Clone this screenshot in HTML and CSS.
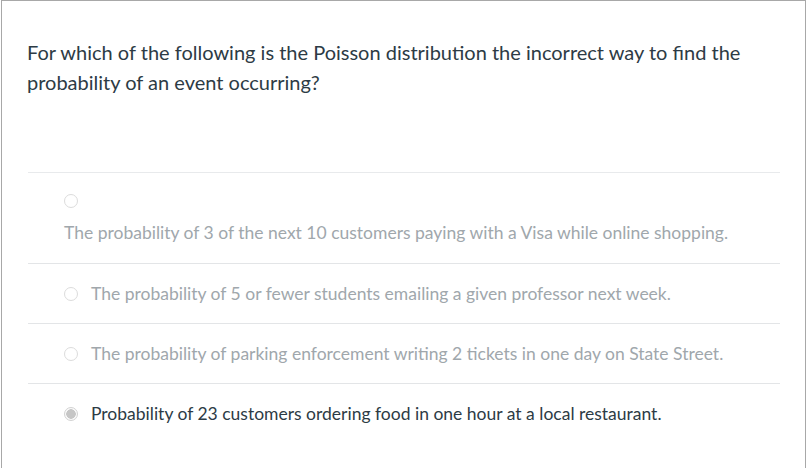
FILE: index.html
```html
<!DOCTYPE html>
<html>
<head>
<meta charset="utf-8">
<link rel="stylesheet" href="styles.css">
</head>
<body>
<div class="frame">
  <p class="question">For which of the following is the Poisson distribution the incorrect way to find the probability of an event occurring?</p>
  <div class="answers">
    <div class="answer stacked">
      <span class="radio"></span>
      <span class="label muted">The probability of 3 of the next 10 customers paying with a Visa while online shopping.</span>
    </div>
    <div class="answer">
      <span class="radio"></span>
      <span class="label muted">The probability of 5 or fewer students emailing a given professor next week.</span>
    </div>
    <div class="answer">
      <span class="radio"></span>
      <span class="label muted">The probability of parking enforcement writing 2 tickets in one day on State Street.</span>
    </div>
    <div class="answer last">
      <span class="radio checked"></span>
      <span class="label">Probability of 23 customers ordering food in one hour at a local restaurant.</span>
    </div>
  </div>
</div>
</body>
</html>
```
FILE: styles.css
```css
html, body {
  margin: 0;
  padding: 0;
  background: #fff;
  overflow: hidden;
}
body {
  font-family: Lato, "Open Sans", sans-serif;
  color: #2d3b45;
}
.frame {
  margin-left: 1px;
  width: 805px;
  height: 100vh;
  box-sizing: border-box;
  border: 1px solid #a8a8a8;
  border-bottom: none;
  padding: 36px 25px 0 25px;
}
.question {
  margin: 0;
  font-size: 20px;
  line-height: 30px;
  color: #2d3b45;
}
.answers {
  margin-top: 75px;
  border-top: 1px solid #e8eaec;
  margin-left: 1px;
}
.answer {
  display: flex;
  align-items: center;
  gap: 13px;
  padding: 18px 0 17px 36px;
  border-bottom: 1px solid #e3e5e7;
}
.answer.last {
  border-bottom: none;
}
.answer.stacked {
  flex-direction: column;
  align-items: flex-start;
  gap: 13px;
  padding-top: 21px;
  padding-bottom: 18px;
}
.label {
  font-size: 17.5px;
  line-height: 24px;
  white-space: nowrap;
}
.muted {
  color: #a0a7ac;
}
.radio {
  width: 14px;
  height: 14px;
  box-sizing: border-box;
  border: 1px solid #dcdcdc;
  border-radius: 50%;
  background: #fff;
  flex: none;
}
.radio.checked {
  border: 1px solid #d2d2d2;
  background: radial-gradient(circle, #c6c6c6 0 4.5px, #fafafa 5px);
}
```
